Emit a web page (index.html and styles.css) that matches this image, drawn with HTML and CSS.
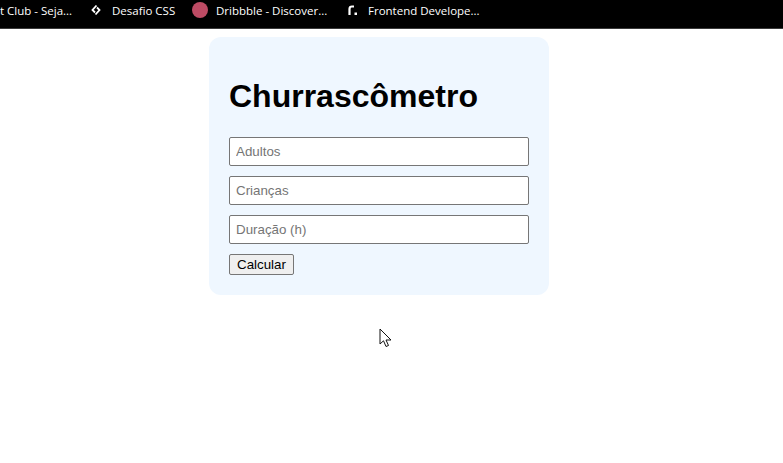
FILE: index.html
```html
<!DOCTYPE html>
<html lang="pt-BR">
<head>
<meta charset="utf-8">
<title>Churrascômetro</title>
<link rel="stylesheet" href="styles.css">
</head>
<body>
<nav class="bookmarks">
  <span class="bm bm-first">t Club - Seja...</span>
  <span class="bm bm-css">
    <svg class="ico" width="14" height="14" viewBox="0 0 14 14"><path d="M7.5 2.5 L3.5 7 L6 9.5 M6.5 11.5 L10.5 7 L8 4.5" fill="none" stroke="#fff" stroke-width="1.8"/></svg>
    Desafio CSS</span>
  <span class="bm bm-drib"><i class="dot"></i>Dribbble - Discover...</span>
  <span class="bm bm-front">
    <svg class="ico" width="14" height="14" viewBox="0 0 14 14"><path d="M2.5 12 V6 Q2.5 3.5 5 3.5 H7" fill="none" stroke="#fff" stroke-width="2.2"/><rect x="7.5" y="9.5" width="2.5" height="2.5" fill="#fff"/></svg>
    Frontend Develope...</span>
</nav>
<main class="page">
  <section class="card">
    <h1 class="title">Churrascômetro</h1>
    <input class="field" type="text" placeholder="Adultos">
    <input class="field" type="text" placeholder="Crianças">
    <input class="field" type="text" placeholder="Duração (h)">
    <button class="calc" type="button">Calcular</button>
  </section>
</main>
<svg class="cursor" width="14" height="21" viewBox="0 0 14 21"><path d="M1 1 V16 L4.5 12.8 L7 18.5 L9.5 17.5 L7 12 H12 Z" fill="#fff" stroke="#111" stroke-width="1"/></svg>
</body>
</html>
```
FILE: styles.css
```css
html, body { margin: 0; padding: 0; background: #fff; }
body { width: 783px; height: 463px; overflow: hidden; position: relative; font-family: "Liberation Sans", Arial, sans-serif; }
.bookmarks { height: 29px; padding-bottom: 8px; background: #000; border-bottom: 1px solid #3a3a3a; box-sizing: border-box; display: flex; align-items: center; color: #fff; font-family: "Open Sans", "Noto Sans", sans-serif; font-size: 11.5px; white-space: nowrap; overflow: hidden; }
.bm { display: flex; align-items: center; }
.bm-first { width: 89px; flex: none; }
.bm-css { width: 103px; flex: none; }
.bm-css .ico { margin-right: 9px; }
.bm-drib { width: 155px; flex: none; }
.dot { width: 16px; height: 16px; border-radius: 50%; background: #bd4b64; margin-right: 8px; flex: none; }
.bm-front .ico { margin-right: 7px; }
.ico { flex: none; }
.page { display: flex; justify-content: center; padding-top: 8px; padding-right: 25px; }
.card { width: 340px; box-sizing: border-box; height: 258px; background: #eff7ff; border-radius: 12px; padding: 20px; display: flex; flex-direction: column; align-items: flex-start; }
.title { margin: 21px 0 22px; font-size: 32px; line-height: 37px; font-weight: 700; color: #000; }
.field { width: 300px; height: 29px; box-sizing: border-box; border: 1px solid #767676; border-radius: 2px; padding: 1px 6px; margin: 0 0 10px; font: 13.33px "Liberation Sans", Arial, sans-serif; background: #fff; }
.field::placeholder { color: #757575; }
.calc { height: 21px; padding: 1px 7px; border: 1px solid #767676; border-radius: 2px; background: #efefef; color: #000; font: 13.33px "Liberation Sans", Arial, sans-serif; }
.cursor { position: absolute; left: 379px; top: 328px; }
```
